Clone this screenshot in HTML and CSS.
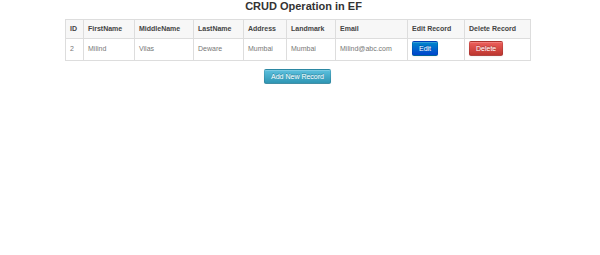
FILE: index.html
```html
<!DOCTYPE html>
<html>
<head>
<meta charset="utf-8">
<link rel="stylesheet" href="styles.css">
</head>
<body>
<div class="page">
  <h2 class="title">CRUD Operation in EF</h2>
  <table class="grid">
    <colgroup>
      <col class="c-id"><col class="c-first"><col class="c-middle"><col class="c-last"><col class="c-addr"><col class="c-land"><col class="c-email"><col class="c-edit"><col class="c-del">
    </colgroup>
    <thead>
      <tr>
        <th>ID</th><th>FirstName</th><th>MiddleName</th><th>LastName</th><th>Address</th><th>Landmark</th><th>Email</th><th>Edit Record</th><th>Delete Record</th>
      </tr>
    </thead>
    <tbody>
      <tr>
        <td>2</td><td>Milind</td><td>Vilas</td><td>Deware</td><td>Mumbai</td><td>Mumbai</td><td>Milind@abc.com</td>
        <td><button class="btn btn-primary">Edit</button></td>
        <td><button class="btn btn-danger">Delete</button></td>
      </tr>
    </tbody>
  </table>
  <div class="actions">
    <button class="btn btn-info">Add New Record</button>
  </div>
</div>
</body>
</html>
```

FILE: styles.css
```css
html, body {
  margin: 0;
  padding: 0;
  background: #fff;
}
body {
  font-family: "Liberation Sans", Arial, sans-serif;
  color: #333;
}
.page {
  width: 465px;
  margin-left: 65px;
}
.title {
  margin: 0;
  padding-top: 1px;
  height: 18px;
  font-size: 11px;
  line-height: 11px;
  font-weight: bold;
  text-align: center;
  color: #333;
  padding-left: 12px;
}
.grid {
  width: 465px;
  table-layout: fixed;
  border-collapse: collapse;
  font-size: 7px;
  line-height: 10px;
  border: 1px solid #ddd;
}
.c-id { width: 18px; }
.c-first { width: 51px; }
.c-middle { width: 59px; }
.c-last { width: 50px; }
.c-addr { width: 43px; }
.c-land { width: 49px; }
.c-email { width: 72px; }
.c-edit { width: 57px; }
.c-del { width: 66px; }
.grid th, .grid td {
  border: 1px solid #ddd;
  padding: 4px 4px;
  text-align: left;
  vertical-align: top;
  white-space: nowrap;
  overflow: hidden;
}
.grid th {
  font-weight: bold;
  color: #444;
  background: #f7f7f7;
  height: 10px;
}
.grid td {
  color: #777;
  padding-top: 5px;
  padding-bottom: 6px;
}
.grid td:nth-child(n+8) {
  padding-top: 2px;
  padding-bottom: 3px;
}
.btn {
  display: inline-block;
  font-family: "Liberation Sans", Arial, sans-serif;
  font-size: 7px;
  line-height: 9px;
  padding: 2px 6px;
  border-radius: 2px;
  color: #fff;
  text-shadow: 0 -1px 0 rgba(0,0,0,0.25);
  border: 1px solid rgba(0,0,0,0.1);
  border-bottom-color: rgba(0,0,0,0.25);
  box-shadow: inset 0 1px 0 rgba(255,255,255,0.2), 0 1px 2px rgba(0,0,0,0.05);
  cursor: pointer;
  margin: 0;
}
.btn-primary {
  background-color: #006dcc;
  background-image: linear-gradient(to bottom, #0088cc, #0044cc);
}
.btn-danger {
  background-color: #da4f49;
  background-image: linear-gradient(to bottom, #ee5f5b, #bd362f);
}
.btn-info {
  background-color: #49afcd;
  background-image: linear-gradient(to bottom, #5bc0de, #2f96b4);
}
.actions {
  display: flex;
  justify-content: center;
  margin-top: 8px;
}
```
